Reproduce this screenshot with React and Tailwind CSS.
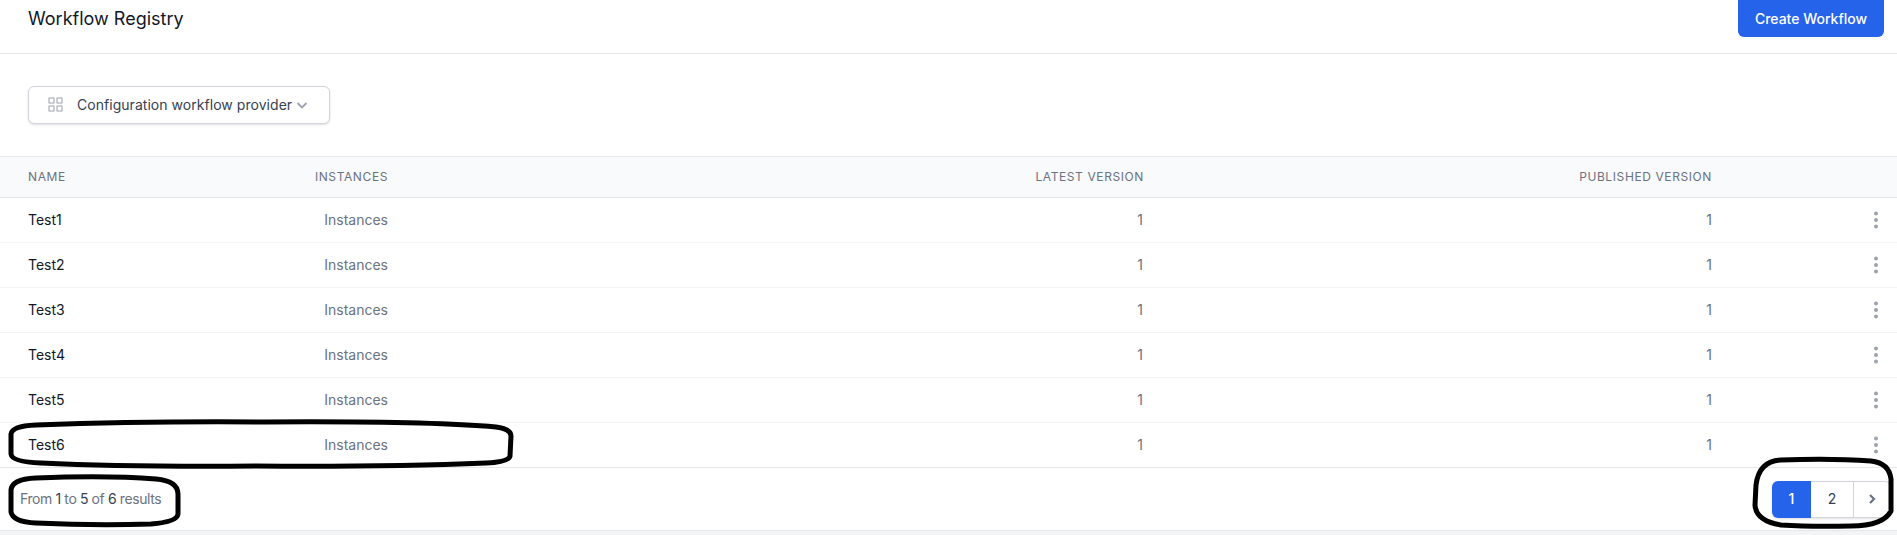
const rows = ['Test1', 'Test2', 'Test3', 'Test4', 'Test5', 'Test6'];

function Kebab() {
  return (
    <svg width="20" height="20" viewBox="0 0 20 20" className="text-[#9ca3af]" fill="currentColor">
      <circle cx="10" cy="3.5" r="2" />
      <circle cx="10" cy="10" r="2" />
      <circle cx="10" cy="16.5" r="2" />
    </svg>
  );
}

function Ring({ className, w, h, d }) {
  return (
    <svg width={w} height={h} viewBox={`0 0 ${w} ${h}`} fill="none" className={`absolute pointer-events-none ${className}`}>
      <path d={d} stroke="#000" strokeWidth="5" strokeLinejoin="round" />
    </svg>
  );
}

export default function App() {
  return (
    <div className="relative w-[1897px] h-[535px] overflow-hidden bg-white font-['Inter',sans-serif]">
      {/* HEADER */}
      <div className="flex justify-between items-start h-[54px] pl-7 pr-[13px] border-b border-[#e5e7eb]">
        <h1 className="text-lg leading-[37px] text-[#111827]">Workflow Registry</h1>
        <button className="h-[37px] w-[146px] rounded-b-md bg-[#2563eb] text-sm font-medium text-white">Create Workflow</button>
      </div>

      {/* FILTER */}
      <div className="px-7 pt-8 pb-8">
        <button className="flex items-center w-[302px] h-[38px] pl-[19px] rounded-md border border-[#d1d5db] bg-white text-sm text-[#374151] shadow-sm">
          <svg width="16" height="16" viewBox="0 0 16 16" fill="none" stroke="#9ca3af" strokeWidth="1">
            <rect x="1" y="1" width="5" height="5" />
            <rect x="9" y="1" width="5" height="5" />
            <rect x="1" y="9" width="5" height="5" />
            <rect x="9" y="9" width="5" height="5" />
          </svg>
          <span className="ml-[13px] tracking-[0.04px]">Configuration workflow provider</span>
          <svg width="14" height="14" viewBox="0 0 14 14" fill="none" stroke="#9ca3af" strokeWidth="1.8" className="ml-[3px]">
            <path d="M2.5 5l4.5 4.5L11.500 5" />
          </svg>
        </button>
      </div>

      {/* TABELA */}
      <div className="grid grid-cols-[288px_100px_756px_568px_1fr] items-center h-[42px] border-y border-[#e5e7eb] bg-[#f9fafb] text-xs uppercase tracking-wider text-[#6b7280]">
        <div className="pl-7">Name</div>
        <div className="text-right">Instances</div>
        <div className="text-right">Latest version</div>
        <div className="text-right">Published version</div>
        <div />
      </div>
      {rows.map((name, index) => (
        <div
          key={index}
          className={`grid grid-cols-[288px_100px_755px_569px_1fr] items-center h-[45px] text-sm text-[#6b7280] ${index < 5 ? 'border-b border-[#f3f4f6]' : 'border-b border-[#e5e7eb]'}`}
        >
          <div className="pl-7 text-[#111827]">{name}</div>
          <div className="text-right">Instances</div>
          <div className="text-right">1</div>
          <div className="text-right">1</div>
          <div className="flex justify-end pr-[11px]">
            <Kebab />
          </div>
        </div>
      ))}

      {/* STOPKA */}
      <div className="flex justify-between items-center h-[63px] pl-5 pr-1.5 border-b border-[#e5e7eb]">
        <p className="text-sm tracking-[-0.4px] text-[#6b7280]">
          From <span className="text-[#374151]">1</span> to <span className="text-[#374151]">5</span> of <span className="text-[#374151]">6</span> results
        </p>
        <div className="flex h-[37px] rounded-md shadow-sm text-sm">
          <button className="w-[39px] rounded-l-md bg-[#2563eb] font-medium text-white">1</button>
          <button className="w-[43px] border-y border-r border-[#d1d5db] bg-white text-[#374151]">2</button>
          <button className="flex items-center justify-center w-[37px] rounded-r-md border-y border-r border-[#d1d5db] bg-white text-[#6b7280]">
            <svg width="12" height="12" viewBox="0 0 12 12" fill="none" stroke="currentColor" strokeWidth="2.2">
              <path d="M4 2l4 4-4 4" />
            </svg>
          </button>
        </div>
      </div>
      <div className="h-[5px] bg-[#f3f4f6]" />

      {/* ZAZNACZENIA */}
      <Ring
        className="left-[6px] top-[418px]"
        w={510}
        h={52}
        d="M5 16 Q6 8 30 7 Q140 3 260 4 Q420 3 490 9 Q505 11 505 18 L504 38 Q503 44 480 45 Q380 49 250 48 Q120 49 35 45 Q6 44 5 36 Z"
      />
      <Ring
        className="left-[6px] top-[472px]"
        w={176}
        h={58}
        d="M5 18 Q6 7 30 6 Q100 3 150 7 Q172 9 172 22 L172 42 Q171 50 145 52 Q90 54 30 51 Q7 50 5 40 Z"
      />
      <Ring
        className="left-[1751px] top-[455px]"
        w={144}
        h={76}
        d="M5 30 Q8 6 30 5 Q80 3 120 6 Q138 8 140 24 L140 56 Q132 71 100 71 Q60 72 30 70 Q5 66 4 50 Z"
      />
    </div>
  );
}
